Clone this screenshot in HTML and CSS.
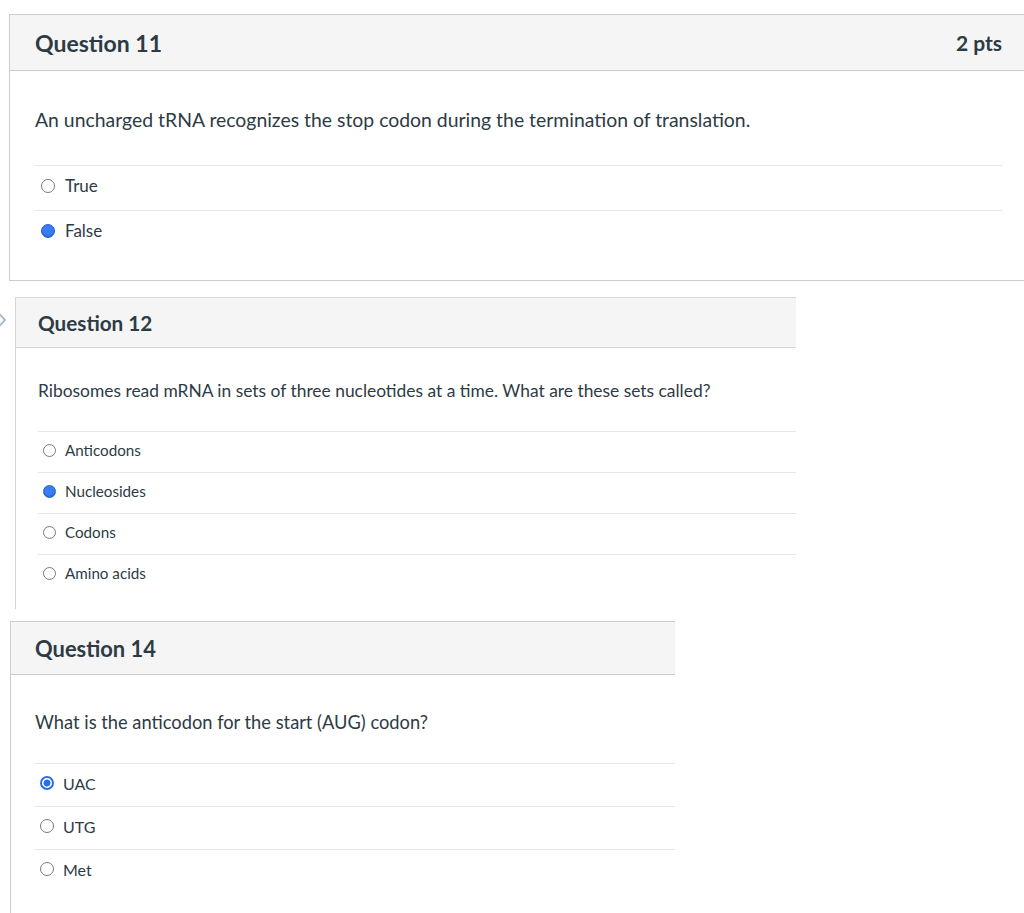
FILE: index.html
```html
<!DOCTYPE html>
<html>
<head>
<meta charset="utf-8">
<link rel="stylesheet" href="styles.css">
</head>
<body>
<div class="page">
  <section class="card card1">
    <header class="q-head">
      <h2 class="q-title">Question 11</h2>
      <span class="q-pts">2 pts</span>
    </header>
    <div class="q-body">
      <p class="q-text">An uncharged tRNA recognizes the stop codon during the termination of translation.</p>
      <ul class="answers">
        <li class="answer"><span class="radio"></span><span>True</span></li>
        <li class="answer"><span class="radio filled"></span><span>False</span></li>
      </ul>
    </div>
  </section>

  <div class="row2">
    <div class="chev-col">
      <svg class="chev" width="8" height="18" viewBox="0 0 8 18"><path d="M-2 1.5 L5 9 L-2 16.5" fill="none" stroke="#a9b9c9" stroke-width="2"/></svg>
    </div>
    <section class="card card2">
      <header class="q-head">
        <h2 class="q-title">Question 12</h2>
      </header>
      <div class="q-body">
        <p class="q-text">Ribosomes read mRNA in sets of three nucleotides at a time. What are these sets called?</p>
        <ul class="answers">
          <li class="answer"><span class="radio"></span><span>Anticodons</span></li>
          <li class="answer"><span class="radio filled"></span><span>Nucleosides</span></li>
          <li class="answer"><span class="radio"></span><span>Codons</span></li>
          <li class="answer"><span class="radio"></span><span>Amino acids</span></li>
        </ul>
      </div>
    </section>
  </div>

  <section class="card card3">
    <header class="q-head">
      <h2 class="q-title">Question 14</h2>
    </header>
    <div class="q-body">
      <p class="q-text">What is the anticodon for the start (AUG) codon?</p>
      <ul class="answers">
        <li class="answer"><span class="radio checked"></span><span>UAC</span></li>
        <li class="answer"><span class="radio"></span><span>UTG</span></li>
        <li class="answer"><span class="radio"></span><span>Met</span></li>
      </ul>
    </div>
  </section>
</div>
</body>
</html>
```

FILE: styles.css
```css
* { box-sizing: border-box; }
html, body { margin: 0; padding: 0; background: #fff; overflow: hidden; }
body {
  font-family: Lato, "Open Sans", "Liberation Sans", sans-serif;
  color: #2d3b45;
  width: 1024px;
  height: 913px;
}
.page { display: flex; flex-direction: column; }

.card { background: #fff; }
.q-head {
  display: flex;
  align-items: center;
  justify-content: space-between;
  background: #f5f5f5;
  border-bottom: 1px solid #c7cdd1;
}
.q-title { margin: 0; font-weight: 700; }
.q-pts { font-weight: 700; }
.q-text { margin: 0; }
.answers { list-style: none; margin: 0; padding: 0; }
.answer {
  display: flex;
  align-items: center;
  border-top: 1px solid #e4e6e8;
}

.radio {
  flex: none;
  border-radius: 50%;
  border: 1px solid #7a7a7a;
  background: #fff;
}
.radio.filled {
  border: 1px solid #1f5fd6;
  background: radial-gradient(circle at 50% 38%, #3b7cf0 0 55%, #2a68e0 70%, #2c66d8 100%);
}
.radio.checked {
  border: 2px solid #2a6fe8;
  background: radial-gradient(circle, #2a6fe8 0 3.2px, #fff 3.8px);
}

/* Card 1 */
.card1 {
  margin: 14px 0 0 9px;
  border: 1px solid #c7cdd1;
  border-right: none;
  height: 267px;
}
.card1 .q-head { height: 56px; padding: 0 22px 0 25px; }
.card1 .q-title { font-size: 23px; }
.card1 .q-pts { font-size: 21px; }
.card1 .q-body { padding: 0 22px 0 25px; }
.card1 .q-text { font-size: 19.4px; line-height: 24px; margin: 37px 0 33px; }
.card1 .answer { height: 45px; font-size: 17px; padding-bottom: 5px; }
.card1 .radio { width: 14px; height: 14px; margin: 0 10px 0 6px; }

/* Card 2 */
.row2 { display: flex; margin-top: 16px; }
.chev-col { width: 15px; flex: none; padding-top: 14px; }
.chev { display: block; }
.card2 {
  width: 781px;
  height: 312px;
  border-top: 1px solid #d4d8db;
  border-left: 1px solid #d4d8db;
}
.card2 .q-head { height: 50px; padding: 0 22px; border-bottom-color: #d4d8db; }
.card2 .q-title { font-size: 20.7px; }
.card2 .q-body { padding: 0 0 0 22px; }
.card2 .q-text { font-size: 17.4px; line-height: 22px; margin: 32px 0 29px; }
.card2 .answer { height: 41px; font-size: 15.2px; padding-bottom: 4px; }
.card2 .radio { width: 13px; height: 13px; margin: 0 9px 0 5px; }

/* Card 3 */
.card3 {
  margin: 12px 0 0 10px;
  width: 665px;
  height: 300px;
  border-top: 1px solid #c7cdd1;
  border-left: 1px solid #c7cdd1;
}
.card3 .q-head { height: 53px; padding: 0 24px; }
.card3 .q-title { font-size: 21.9px; }
.card3 .q-body { padding: 0 0 0 24px; }
.card3 .q-text { font-size: 18.3px; line-height: 24px; margin: 35px 0 29px; }
.card3 .answer { height: 43px; font-size: 16px; padding-bottom: 4px; }
.card3 .radio { width: 14px; height: 14px; margin: 0 9px 0 5px; }
```
